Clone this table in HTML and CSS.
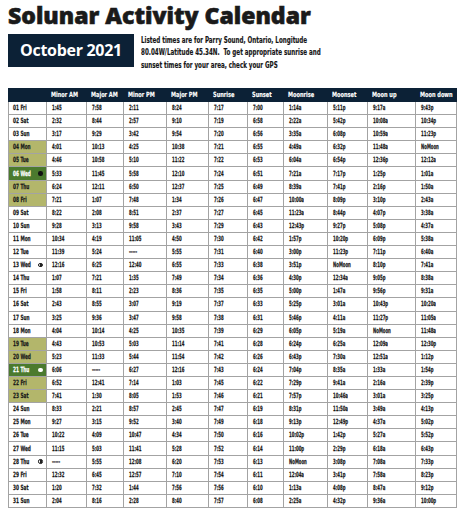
FILE: index.html
```html
<!DOCTYPE html>
<html lang="en">
<head>
<meta charset="utf-8">
<title>Solunar Activity Calendar</title>
<link rel="stylesheet" href="styles.css">
</head>
<body>
<div class="page">
  <h1 class="title">Solunar Activity Calendar</h1>
  <div class="subhead">
    <div class="month">October 2021</div>
    <p class="note">Listed times are for Parry Sound, Ontario, Longitude<br>80.04W/Latitude 45.34N.&nbsp; To get appropriate sunrise and<br>sunset times for your area, check your GPS</p>
  </div>
  <table class="cal">
    <colgroup>
      <col class="c1"><col class="c2"><col class="c3"><col class="c4"><col class="c5"><col class="c6"><col class="c7"><col class="c8"><col class="c9"><col class="c10"><col class="c11">
    </colgroup>
    <thead>
      <tr><th></th><th><span>Minor AM</span></th><th><span>Major AM</span></th><th><span>Minor PM</span></th><th><span>Major PM</span></th><th><span>Sunrise</span></th><th><span>Sunset</span></th><th><span>Moonrise</span></th><th><span>Moonset</span></th><th><span>Moon up</span></th><th><span>Moon down</span></th></tr>
    </thead>
    <tbody>
      <tr><td class="day"><span>01 Fri</span></td><td><span>1:45</span></td><td><span>7:58</span></td><td><span>2:11</span></td><td><span>8:24</span></td><td><span>7:17</span></td><td><span>7:00</span></td><td><span>1:14a</span></td><td><span>5:11p</span></td><td><span>9:17a</span></td><td><span>9:43p</span></td></tr>
      <tr><td class="day"><span>02 Sat</span></td><td><span>2:32</span></td><td><span>8:44</span></td><td><span>2:57</span></td><td><span>9:10</span></td><td><span>7:19</span></td><td><span>6:58</span></td><td><span>2:22a</span></td><td><span>5:42p</span></td><td><span>10:08a</span></td><td><span>10:34p</span></td></tr>
      <tr><td class="day"><span>03 Sun</span></td><td><span>3:17</span></td><td><span>9:29</span></td><td><span>3:42</span></td><td><span>9:54</span></td><td><span>7:20</span></td><td><span>6:56</span></td><td><span>3:35a</span></td><td><span>6:08p</span></td><td><span>10:59a</span></td><td><span>11:23p</span></td></tr>
      <tr><td class="day hl"><span>04 Mon</span></td><td><span>4:01</span></td><td><span>10:13</span></td><td><span>4:25</span></td><td><span>10:38</span></td><td><span>7:21</span></td><td><span>6:55</span></td><td><span>4:49a</span></td><td><span>6:32p</span></td><td><span>11:48a</span></td><td><span>NoMoon</span></td></tr>
      <tr><td class="day hl"><span>05 Tue</span></td><td><span>4:46</span></td><td><span>10:58</span></td><td><span>5:10</span></td><td><span>11:22</span></td><td><span>7:22</span></td><td><span>6:53</span></td><td><span>6:04a</span></td><td><span>6:54p</span></td><td><span>12:36p</span></td><td><span>12:12a</span></td></tr>
      <tr><td class="day peak"><div class="dc"><span>06 Wed</span><i class="moon new"></i></div></td><td><span>5:33</span></td><td><span>11:45</span></td><td><span>5:58</span></td><td><span>12:10</span></td><td><span>7:24</span></td><td><span>6:51</span></td><td><span>7:21a</span></td><td><span>7:17p</span></td><td><span>1:25p</span></td><td><span>1:01a</span></td></tr>
      <tr><td class="day hl"><span>07 Thu</span></td><td><span>6:24</span></td><td><span>12:11</span></td><td><span>6:50</span></td><td><span>12:37</span></td><td><span>7:25</span></td><td><span>6:49</span></td><td><span>8:39a</span></td><td><span>7:41p</span></td><td><span>2:16p</span></td><td><span>1:50a</span></td></tr>
      <tr><td class="day hl"><span>08 Fri</span></td><td><span>7:21</span></td><td><span>1:07</span></td><td><span>7:48</span></td><td><span>1:34</span></td><td><span>7:26</span></td><td><span>6:47</span></td><td><span>10:00a</span></td><td><span>8:09p</span></td><td><span>3:10p</span></td><td><span>2:43a</span></td></tr>
      <tr><td class="day"><span>09 Sat</span></td><td><span>8:22</span></td><td><span>2:08</span></td><td><span>8:51</span></td><td><span>2:37</span></td><td><span>7:27</span></td><td><span>6:45</span></td><td><span>11:23a</span></td><td><span>8:44p</span></td><td><span>4:07p</span></td><td><span>3:38a</span></td></tr>
      <tr><td class="day"><span>10 Sun</span></td><td><span>9:28</span></td><td><span>3:13</span></td><td><span>9:58</span></td><td><span>3:43</span></td><td><span>7:29</span></td><td><span>6:43</span></td><td><span>12:43p</span></td><td><span>9:27p</span></td><td><span>5:08p</span></td><td><span>4:37a</span></td></tr>
      <tr><td class="day"><span>11 Mon</span></td><td><span>10:34</span></td><td><span>4:19</span></td><td><span>11:05</span></td><td><span>4:50</span></td><td><span>7:30</span></td><td><span>6:42</span></td><td><span>1:57p</span></td><td><span>10:20p</span></td><td><span>6:09p</span></td><td><span>5:38a</span></td></tr>
      <tr><td class="day"><span>12 Tue</span></td><td><span>11:39</span></td><td><span>5:24</span></td><td><span>-----</span></td><td><span>5:55</span></td><td><span>7:31</span></td><td><span>6:40</span></td><td><span>3:00p</span></td><td><span>11:23p</span></td><td><span>7:11p</span></td><td><span>6:40a</span></td></tr>
      <tr><td class="day"><div class="dc"><span>13 Wed</span><i class="moon quarter"></i></div></td><td><span>12:16</span></td><td><span>6:25</span></td><td><span>12:40</span></td><td><span>6:55</span></td><td><span>7:33</span></td><td><span>6:38</span></td><td><span>3:51p</span></td><td><span>NoMoon</span></td><td><span>8:10p</span></td><td><span>7:41a</span></td></tr>
      <tr><td class="day"><span>14 Thu</span></td><td><span>1:07</span></td><td><span>7:21</span></td><td><span>1:35</span></td><td><span>7:49</span></td><td><span>7:34</span></td><td><span>6:36</span></td><td><span>4:30p</span></td><td><span>12:34a</span></td><td><span>9:05p</span></td><td><span>8:38a</span></td></tr>
      <tr><td class="day"><span>15 Fri</span></td><td><span>1:58</span></td><td><span>8:11</span></td><td><span>2:23</span></td><td><span>8:36</span></td><td><span>7:35</span></td><td><span>6:35</span></td><td><span>5:00p</span></td><td><span>1:47a</span></td><td><span>9:56p</span></td><td><span>9:31a</span></td></tr>
      <tr><td class="day"><span>16 Sat</span></td><td><span>2:43</span></td><td><span>8:55</span></td><td><span>3:07</span></td><td><span>9:19</span></td><td><span>7:37</span></td><td><span>6:33</span></td><td><span>5:25p</span></td><td><span>3:01a</span></td><td><span>10:43p</span></td><td><span>10:20a</span></td></tr>
      <tr><td class="day"><span>17 Sun</span></td><td><span>3:25</span></td><td><span>9:36</span></td><td><span>3:47</span></td><td><span>9:58</span></td><td><span>7:38</span></td><td><span>6:31</span></td><td><span>5:46p</span></td><td><span>4:11a</span></td><td><span>11:27p</span></td><td><span>11:05a</span></td></tr>
      <tr><td class="day"><span>18 Mon</span></td><td><span>4:04</span></td><td><span>10:14</span></td><td><span>4:25</span></td><td><span>10:35</span></td><td><span>7:39</span></td><td><span>6:29</span></td><td><span>6:05p</span></td><td><span>5:19a</span></td><td><span>NoMoon</span></td><td><span>11:48a</span></td></tr>
      <tr><td class="day hl"><span>19 Tue</span></td><td><span>4:43</span></td><td><span>10:53</span></td><td><span>5:03</span></td><td><span>11:14</span></td><td><span>7:41</span></td><td><span>6:28</span></td><td><span>6:24p</span></td><td><span>6:25a</span></td><td><span>12:09a</span></td><td><span>12:30p</span></td></tr>
      <tr><td class="day hl"><span>20 Wed</span></td><td><span>5:23</span></td><td><span>11:33</span></td><td><span>5:44</span></td><td><span>11:54</span></td><td><span>7:42</span></td><td><span>6:26</span></td><td><span>6:43p</span></td><td><span>7:30a</span></td><td><span>12:51a</span></td><td><span>1:12p</span></td></tr>
      <tr><td class="day peak"><div class="dc"><span>21 Thu</span><i class="moon full"></i></div></td><td><span>6:06</span></td><td><span>-----</span></td><td><span>6:27</span></td><td><span>12:16</span></td><td><span>7:43</span></td><td><span>6:24</span></td><td><span>7:04p</span></td><td><span>8:35a</span></td><td><span>1:33a</span></td><td><span>1:54p</span></td></tr>
      <tr><td class="day hl"><span>22 Fri</span></td><td><span>6:52</span></td><td><span>12:41</span></td><td><span>7:14</span></td><td><span>1:03</span></td><td><span>7:45</span></td><td><span>6:22</span></td><td><span>7:29p</span></td><td><span>9:41a</span></td><td><span>2:16a</span></td><td><span>2:39p</span></td></tr>
      <tr><td class="day hl"><span>23 Sat</span></td><td><span>7:41</span></td><td><span>1:30</span></td><td><span>8:05</span></td><td><span>1:53</span></td><td><span>7:46</span></td><td><span>6:21</span></td><td><span>7:57p</span></td><td><span>10:46a</span></td><td><span>3:01a</span></td><td><span>3:25p</span></td></tr>
      <tr><td class="day"><span>24 Sun</span></td><td><span>8:33</span></td><td><span>2:21</span></td><td><span>8:57</span></td><td><span>2:45</span></td><td><span>7:47</span></td><td><span>6:19</span></td><td><span>8:31p</span></td><td><span>11:50a</span></td><td><span>3:49a</span></td><td><span>4:13p</span></td></tr>
      <tr><td class="day"><span>25 Mon</span></td><td><span>9:27</span></td><td><span>3:15</span></td><td><span>9:52</span></td><td><span>3:40</span></td><td><span>7:49</span></td><td><span>6:18</span></td><td><span>9:13p</span></td><td><span>12:49p</span></td><td><span>4:37a</span></td><td><span>5:02p</span></td></tr>
      <tr><td class="day"><span>26 Tue</span></td><td><span>10:22</span></td><td><span>4:09</span></td><td><span>10:47</span></td><td><span>4:34</span></td><td><span>7:50</span></td><td><span>6:16</span></td><td><span>10:02p</span></td><td><span>1:42p</span></td><td><span>5:27a</span></td><td><span>5:52p</span></td></tr>
      <tr><td class="day"><span>27 Wed</span></td><td><span>11:15</span></td><td><span>5:03</span></td><td><span>11:41</span></td><td><span>5:28</span></td><td><span>7:52</span></td><td><span>6:14</span></td><td><span>11:00p</span></td><td><span>2:29p</span></td><td><span>6:18a</span></td><td><span>6:43p</span></td></tr>
      <tr><td class="day"><div class="dc"><span>28 Thu</span><i class="moon quarter"></i></div></td><td><span>-----</span></td><td><span>5:55</span></td><td><span>12:08</span></td><td><span>6:20</span></td><td><span>7:53</span></td><td><span>6:13</span></td><td><span>NoMoon</span></td><td><span>3:08p</span></td><td><span>7:08a</span></td><td><span>7:33p</span></td></tr>
      <tr><td class="day"><span>29 Fri</span></td><td><span>12:32</span></td><td><span>6:45</span></td><td><span>12:57</span></td><td><span>7:10</span></td><td><span>7:54</span></td><td><span>6:11</span></td><td><span>12:04a</span></td><td><span>3:41p</span></td><td><span>7:58a</span></td><td><span>8:23p</span></td></tr>
      <tr><td class="day"><span>30 Sat</span></td><td><span>1:20</span></td><td><span>7:32</span></td><td><span>1:44</span></td><td><span>7:56</span></td><td><span>7:56</span></td><td><span>6:10</span></td><td><span>1:13a</span></td><td><span>4:08p</span></td><td><span>8:47a</span></td><td><span>9:12p</span></td></tr>
      <tr><td class="day"><span>31 Sun</span></td><td><span>2:04</span></td><td><span>8:16</span></td><td><span>2:28</span></td><td><span>8:40</span></td><td><span>7:57</span></td><td><span>6:08</span></td><td><span>2:25a</span></td><td><span>4:32p</span></td><td><span>9:36a</span></td><td><span>10:00p</span></td></tr>
    </tbody>
  </table>
</div>
</body>
</html>
```
FILE: styles.css
```css
html, body {
  margin: 0;
  padding: 0;
  background: #ffffff;
}

.page {
  padding: 0 0 0 8px;
  width: 448px;
  font-family: "Open Sans", "DejaVu Sans", sans-serif;
  color: #1b1b1b;
}

.title {
  margin: 0;
  padding-top: 0;
  font-family: "Open Sans", sans-serif;
  font-weight: 800;
  font-size: 23px;
  line-height: 30px;
  color: #1a1a1a;
  letter-spacing: 0;
  -webkit-text-stroke: 0.6px #1a1a1a;
}

.subhead {
  display: flex;
  align-items: flex-start;
  gap: 7px;
  margin-top: 4px;
  height: 54px;
}

.month {
  flex: none;
  width: 126px;
  height: 33px;
  background: #0c2136;
  color: #ffffff;
  font-weight: 700;
  font-size: 16px;
  letter-spacing: -0.3px;
  line-height: 33px;
  text-align: center;
}

.note {
  margin: 0;
  flex: none;
  width: 240px;
  font-family: "DejaVu Sans Condensed", "DejaVu Sans", sans-serif;
  font-stretch: condensed;
  font-weight: 700;
  font-size: 8.9px;
  line-height: 12.3px;
  color: #161616;
  white-space: nowrap;
  transform: scaleX(0.7);
  transform-origin: 0 0;
  -webkit-text-stroke: 0.15px #161616;
}

.cal {
  table-layout: fixed;
  border-collapse: collapse;
  width: 448px;
  font-family: "DejaVu Sans Condensed", "DejaVu Sans", sans-serif;
  font-stretch: condensed;
  font-weight: 700;
  font-size: 7.2px;
  line-height: 8px;
}

.c1 { width: 38px; }
.c2 { width: 40px; }
.c3 { width: 37px; }
.c4 { width: 43px; }
.c5 { width: 42px; }
.c6 { width: 39px; }
.c7 { width: 36px; }
.c8 { width: 44px; }
.c9 { width: 40px; }
.c10 { width: 48px; }
.c11 { width: 41px; }

.cal th {
  background: #0c2136;
  color: #ffffff;
  height: 12px;
  padding: 0 0 0 4px;
  text-align: left;
  font-weight: 700;
  border: 1px solid #0c2136;
  white-space: nowrap;
}

.cal td {
  height: 12.1px;
  padding: 0 0 0 5px;
  border: 1px solid #a3a3a3;
  color: #1a1a1a;
  white-space: nowrap;
}

.cal span {
  display: inline-block;
  vertical-align: middle;
  transform-origin: 0 50%;
  transform: scaleX(0.6);
  -webkit-text-stroke: 0.25px currentColor;
}

.cal th span {
  transform: scaleX(0.78);
  -webkit-text-stroke: 0.15px currentColor;
}

.cal td.day {
  padding-left: 4px;
}

.cal td.day span {
  transform: scaleX(0.66);
}

.dc {
  display: flex;
  align-items: center;
  height: 8px;
}

.dc span {
  flex: none;
  width: 24px;
}

.cal td.hl {
  background: #b3b66b;
}

.cal td.peak {
  background: #4b7a2e;
  color: #ffffff;
}

.moon {
  flex: none;
  width: 4.5px;
  height: 4.5px;
  margin-left: 1px;
  border-radius: 50%;
  box-sizing: border-box;
}

.moon.new {
  background: #111111;
}

.moon.full {
  background: #ffffff;
}

.moon.quarter {
  border: 0.6px solid #222222;
  background: linear-gradient(90deg, #ffffff 40%, #222222 40%);
}
```
